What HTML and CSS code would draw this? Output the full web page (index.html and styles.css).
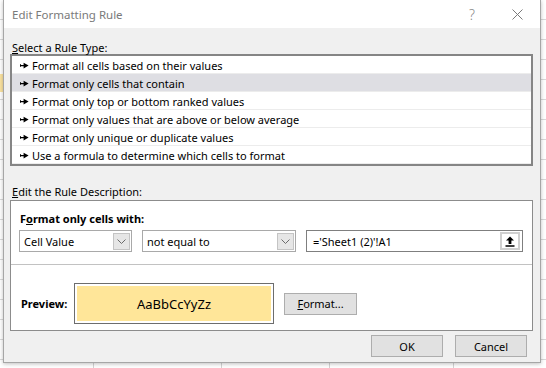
FILE: index.html
```html
<!DOCTYPE html>
<html lang="en">
<head>
    <meta charset="UTF-8">
    <title>Edit Formatting Rule</title>
    <link rel="stylesheet" href="styles.css">
</head>
<body>
    <!-- Dialog window -->
    <div class="dialog">
        <div class="titlebar">
            <span class="title">Edit Formatting Rule</span>
            <span class="help">?</span>
            <span class="close">
                <svg width="11" height="11" viewBox="0 0 11 11"><path d="M0.5 0.5L10.5 10.5M10.5 0.5L0.5 10.5" stroke="#7a7a7a" stroke-width="1" fill="none"/></svg>
            </span>
        </div>

        <div class="content">
            <div class="label"><u>S</u>elect a Rule Type:</div>
            <ul class="rule-list">
                <li><svg class="arrow" width="9" height="7" viewBox="0 0 9 7"><path d="M0 2.2h1v2.6H0z M1 3h3v1.2H1z M3.6 0.8L8.6 3.6 3.6 6.4z" fill="#000"/></svg>Format all cells based on their values</li>
                <li class="selected"><svg class="arrow" width="9" height="7" viewBox="0 0 9 7"><path d="M0 2.2h1v2.6H0z M1 3h3v1.2H1z M3.6 0.8L8.6 3.6 3.6 6.4z" fill="#000"/></svg>Format only cells that contain</li>
                <li><svg class="arrow" width="9" height="7" viewBox="0 0 9 7"><path d="M0 2.2h1v2.6H0z M1 3h3v1.2H1z M3.6 0.8L8.6 3.6 3.6 6.4z" fill="#000"/></svg>Format only top or bottom ranked values</li>
                <li><svg class="arrow" width="9" height="7" viewBox="0 0 9 7"><path d="M0 2.2h1v2.6H0z M1 3h3v1.2H1z M3.6 0.8L8.6 3.6 3.6 6.4z" fill="#000"/></svg>Format only values that are above or below average</li>
                <li><svg class="arrow" width="9" height="7" viewBox="0 0 9 7"><path d="M0 2.2h1v2.6H0z M1 3h3v1.2H1z M3.6 0.8L8.6 3.6 3.6 6.4z" fill="#000"/></svg>Format only unique or duplicate values</li>
                <li><svg class="arrow" width="9" height="7" viewBox="0 0 9 7"><path d="M0 2.2h1v2.6H0z M1 3h3v1.2H1z M3.6 0.8L8.6 3.6 3.6 6.4z" fill="#000"/></svg>Use a formula to determine which cells to format</li>
            </ul>

            <div class="label desc-label"><u>E</u>dit the Rule Description:</div>
            <div class="desc-box">
                <div class="desc-title">F<u>o</u>rmat only cells with:</div>
                <div class="criteria">
                    <div class="select sel-type">
                        <span class="value">Cell Value</span>
                        <span class="drop"><svg width="9" height="5" viewBox="0 0 9 5"><path d="M0.5 0.5L4.5 4.5 8.5 0.5" stroke="#6a6a6a" fill="none"/></svg></span>
                    </div>
                    <div class="select sel-op">
                        <span class="value">not equal to</span>
                        <span class="drop"><svg width="9" height="5" viewBox="0 0 9 5"><path d="M0.5 0.5L4.5 4.5 8.5 0.5" stroke="#6a6a6a" fill="none"/></svg></span>
                    </div>
                    <div class="ref-input">
                        <span class="value">='Sheet1 (2)'!A1</span>
                        <span class="ref-btn"><svg width="10" height="11" viewBox="0 0 10 11"><path d="M5 0.5L9 4.5H6.4V8H3.6V4.5H1z M0.5 9.3h9v1.5h-9z" fill="#000"/></svg></span>
                    </div>
                </div>
                <div class="divider"></div>
                <div class="preview-row">
                    <span class="preview-label">Preview:</span>
                    <div class="preview-box"><div class="preview-fill">AaBbCcYyZz</div></div>
                    <button class="btn format-btn"><u>F</u>ormat...</button>
                </div>
            </div>

            <div class="footer">
                <button class="btn">OK</button>
                <button class="btn">Cancel</button>
            </div>
        </div>
    </div>
</body>
</html>
```

FILE: styles.css
```css
* {
    margin: 0;
    padding: 0;
    box-sizing: border-box;
    font-family: "Noto Sans", "Open Sans", sans-serif;
}

/* Spreadsheet behind the dialog */
body {
    width: 546px;
    height: 368px;
    overflow: hidden;
    background-color: #fff;
    background-image:
        linear-gradient(#d4d4d4, #d4d4d4),
        linear-gradient(#d4d4d4, #d4d4d4),
        linear-gradient(#d4d4d4, #d4d4d4),
        linear-gradient(#d4d4d4, #d4d4d4),
        linear-gradient(#fbe3a0, #fbe3a0),
        repeating-linear-gradient(180deg, transparent 0 19px, #d9d9d9 19px 20px);
    background-size: 1px 100%, 1px 100%, 1px 100%, 1px 100%, 3px 18px, 100% 100%;
    background-position: 93px 0, 221px 0, 329px 0, 453px 0, 0 74px, 0 0;
    background-repeat: no-repeat;
    color: #000;
    font-size: 11px;
}

/* Dialog */
.dialog {
    width: 538px;
    height: 363px;
    margin-left: 3px;
    background: #f0f0f0;
    border: 1px solid #a6a6a6;
    border-top: none;
    box-shadow: 0 1px 4px rgba(0, 0, 0, 0.25);
    display: flex;
    flex-direction: column;
}

.titlebar {
    height: 28px;
    background: #fff;
    display: flex;
    align-items: center;
    flex-shrink: 0;
}

.title {
    flex: 1;
    padding-left: 8px;
    color: #7a7a7a;
    font-size: 11.5px;
}

.help {
    width: 44px;
    text-align: center;
    color: #8a8a8a;
    font-size: 14px;
    font-weight: 300;
}

.close {
    width: 46px;
    display: flex;
    justify-content: center;
    align-items: center;
}

.content {
    flex: 1;
    padding: 12px 7px 0 6px;
}

.label {
    padding-left: 2px;
    padding-top: 1px;
    line-height: 14px;
    height: 14px;
}

.label u, .desc-title u, .btn u {
    text-decoration: underline;
    text-underline-offset: 1px;
}

/* Rule type list */
.rule-list {
    list-style: none;
    background: #fff;
    border: 2px solid #858585;
}

.rule-list li {
    height: 18px;
    border-bottom: 1px solid #ececec;
    display: flex;
    align-items: center;
    padding-left: 8px;
    padding-top: 2px;
    white-space: nowrap;
}

.rule-list li.selected {
    background: #dedee3;
}

.arrow {
    margin-right: 3px;
    margin-top: -1px;
    flex-shrink: 0;
}

/* Rule description */
.desc-label {
    margin-top: 16px;
    padding-top: 2px;
    line-height: 16px;
    height: 18px;
}

.desc-box {
    background: #fff;
    border: 1px solid #8c8c8c;
    padding: 9px 9px 6px 8px;
}

.desc-title {
    font-weight: 700;
    line-height: 16px;
    padding-top: 1px;
    padding-left: 1px;
}

.criteria {
    margin-top: 3px;
    display: flex;
    gap: 10px;
}

.select, .ref-input {
    height: 22px;
    background: #fff;
    border: 1px solid #a9a9a9;
    display: flex;
    align-items: center;
}

.sel-type { width: 113px; }
.sel-op { width: 154px; }
.ref-input { flex: 1; border-color: #7f7f7f; }

.value {
    flex: 1;
    padding-left: 4px;
    padding-top: 1px;
    white-space: nowrap;
}

.ref-input .value {
    padding-left: 6px;
}

.drop {
    width: 17px;
    height: 17px;
    margin-right: 1px;
    background: #e6e6e6;
    border: 1px solid #c4c4c4;
    display: flex;
    justify-content: center;
    align-items: center;
}

.ref-btn {
    width: 20px;
    height: 18px;
    margin-right: 2px;
    background: #fff;
    border: 2px solid #cfcfcf;
    display: flex;
    justify-content: center;
    align-items: center;
}

.divider {
    height: 1px;
    background: #c2c2c2;
    margin: 12px -9px 0 -8px;
}

.preview-row {
    margin-top: 18px;
    display: flex;
    align-items: center;
}

.preview-label {
    width: 55px;
    padding-left: 2px;
    font-weight: 700;
}

.preview-box {
    width: 200px;
    height: 41px;
    border: 1px solid #6d6d6d;
    padding: 2px;
}

.preview-fill {
    height: 100%;
    background: #ffe699;
    display: flex;
    justify-content: center;
    align-items: center;
    font-size: 13px;
}

.btn {
    width: 72px;
    height: 22px;
    background: #e1e1e1;
    border: 1px solid #adadad;
    font-size: 11px;
    color: #000;
}

.format-btn {
    margin-left: 10px;
    width: 73px;
}

.footer {
    margin-top: 4px;
    padding-right: 6px;
    display: flex;
    justify-content: flex-end;
    gap: 12px;
}
```
